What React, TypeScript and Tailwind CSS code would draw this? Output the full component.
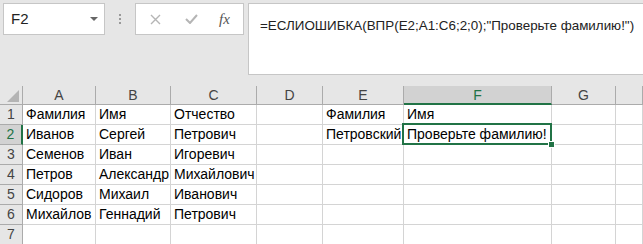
import React from 'react';

const cols = [
  { name: 'A', w: 'w-[73px]' },
  { name: 'B', w: 'w-[75px]' },
  { name: 'C', w: 'w-[86px]' },
  { name: 'D', w: 'w-[66px]' },
  { name: 'E', w: 'w-[81px]' },
  { name: 'F', w: 'w-[148px]' },
  { name: 'G', w: 'w-[64px]' },
  { name: '', w: 'flex-1' },
];

const rows: string[][] = [
  ['Фамилия', 'Имя', 'Отчество', '', 'Фамилия', 'Имя', '', ''],
  ['Иванов', 'Сергей', 'Петрович', '', 'Петровский', 'Проверьте фамилию!', '', ''],
  ['Семенов', 'Иван', 'Игоревич', '', '', '', '', ''],
  ['Петров', 'Александр', 'Михайлович', '', '', '', '', ''],
  ['Сидоров', 'Михаил', 'Иванович', '', '', '', '', ''],
  ['Михайлов', 'Геннадий', 'Петрович', '', '', '', '', ''],
  ['', '', '', '', '', '', '', ''],
];

export default function App() {
  return (
    <div className="w-[643px] h-[244px] overflow-hidden bg-[#e6e6e6] font-['Liberation_Sans',Arial,sans-serif] text-[14px]">
      {/* formula bar area */}
      <div className="flex h-[86px] pt-[3px] pl-[3px]">
        <div className="flex items-start">
          <div className="flex h-[32px] w-[102px] items-center justify-between border border-[#c6c6c6] bg-white pl-[7px] pr-[6px] text-[15px] text-[#222]">
            <span>F2</span>
            <span className="h-0 w-0 border-x-[4px] border-t-[4px] border-x-transparent border-t-[#666]" />
          </div>
          <div className="flex h-[32px] w-[30px] flex-col items-center justify-center gap-[2px]">
            <span className="h-[2px] w-[2px] bg-[#999]" />
            <span className="h-[2px] w-[2px] bg-[#999]" />
            <span className="h-[2px] w-[2px] bg-[#999]" />
          </div>
          <div className="flex h-[32px] w-[109px] items-center border border-[#c6c6c6] bg-white">
            <svg className="ml-[14px]" width="11" height="11" viewBox="0 0 11 11">
              <path d="M1 1L10 10M10 1L1 10" stroke="#b5b5b5" strokeWidth="1.4" />
            </svg>
            <svg className="ml-[24px]" width="13" height="10" viewBox="0 0 13 10">
              <path d="M1 5L5 9L12 1" stroke="#b5b5b5" strokeWidth="2" fill="none" />
            </svg>
            <span className="ml-[21px] font-['Liberation_Serif',serif] text-[15px] italic text-[#555]">fx</span>
          </div>
        </div>
        <div className="ml-[4px] h-[72px] flex-1 whitespace-nowrap border border-r-0 border-[#c6c6c6] bg-white pl-[11px] pt-[12px] text-[13.4px] leading-[20px] text-[#222]">
          =ЕСЛИОШИБКА(ВПР(E2;A1:C6;2;0);"Проверьте фамилию!")
        </div>
      </div>

      {/* grid */}
      <div className="flex flex-col bg-white">
        <div className="flex h-[19px] bg-[#e6e6e6]">
          <div className="relative w-[23px] border-r border-b border-[#ababab]">
            <svg className="absolute bottom-[2px] right-[3px]" width="12" height="12" viewBox="0 0 12 12">
              <path d="M12 0L12 12L0 12Z" fill="#b4b4b4" />
            </svg>
          </div>
          {cols.map((c) => (
            <div
              key={c.name || 'h'}
              className={`${c.w} flex items-center justify-center border-r ${
                c.name === 'F'
                  ? 'border-b-2 border-b-[#217346] border-r-[#ababab] bg-[#d2d2d2] text-[#217346]'
                  : 'border-b border-[#ababab] text-[#444]'
              } text-[14px] leading-none`}
            >
              {c.name}
            </div>
          ))}
        </div>
        {rows.map((r, i) => (
          <div key={i} className="flex h-[20px]">
            <div
              className={`flex w-[23px] items-center justify-center border-b border-[#ababab] text-[14px] ${
                i === 1
                  ? 'border-r-2 border-r-[#217346] bg-[#d2d2d2] text-[#217346]'
                  : 'border-r border-r-[#ababab] bg-[#e6e6e6] text-[#444]'
              }`}
            >
              {i + 1}
            </div>
            {r.map((v, j) => (
              <div
                key={j}
                className={`${cols[j].w} relative flex items-center whitespace-nowrap border-r border-b border-[#d4d4d4] pl-[3px] text-black ${
                  i === 1 && j === 5 ? 'z-10' : ''
                }`}
              >
                {v}
                {i === 1 && j === 5 && (
                  <>
                    <span className="absolute -left-[2px] -top-[2px] h-[22px] w-[150px] border-2 border-[#217346]" />
                    <span className="absolute -bottom-[4px] -right-[4px] h-[7px] w-[7px] border border-white bg-[#217346]" />
                  </>
                )}
              </div>
            ))}
          </div>
        ))}
      </div>
    </div>
  );
}
